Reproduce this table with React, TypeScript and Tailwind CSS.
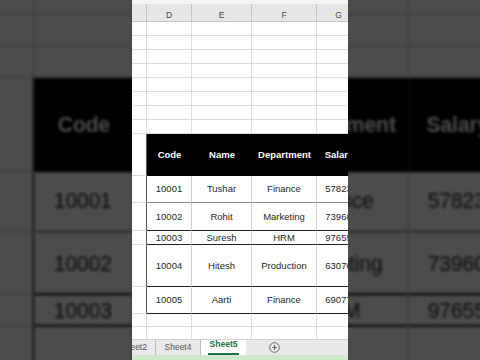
const sheetCols = [
  { key: 'C', w: 'w-[60px]' },
  { key: 'D', w: 'w-[45px]' },
  { key: 'E', w: 'w-[60px]' },
  { key: 'F', w: 'w-[65px]' },
  { key: 'G', w: 'w-[44px]' },
  { key: 'H', w: 'w-[64px]' },
];

const tableCols = ['w-[45px]', 'w-[60px]', 'w-[65px]', 'w-[44px]'];
const headers = ['Code', 'Name', 'Department', 'Salary'];

const rows = [
  { h: 'h-[27px]', b: 'border-b-[#8a8a8a]', cells: ['10001', 'Tushar', 'Finance', '57823'] },
  { h: 'h-[28px]', b: 'border-b-[#222]', cells: ['10002', 'Rohit', 'Marketing', '73960'] },
  { h: 'h-[14px]', b: 'border-b-[#222]', cells: ['10003', 'Suresh', 'HRM', '97655'] },
  { h: 'h-[42px]', b: 'border-b-[#222]', cells: ['10004', 'Hitesh', 'Production', '63070'] },
  { h: 'h-[27px]', b: 'border-b-[#222]', cells: ['10005', 'Aarti', 'Finance', '69077'] },
];

function EmptyRow({ h }: { h: string }) {
  return (
    <div className={`flex ${h}`}>
      {sheetCols.map((c) => (
        <div key={c.key} className={`${c.w} shrink-0 border-r border-b border-[#dcdcdc]`} />
      ))}
    </div>
  );
}

function Sheet() {
  return (
    <div className="w-[338px] bg-white font-['Liberation_Sans',Arial,sans-serif] text-[9.5px] leading-none text-[#1f1f1f]">
      <div className="h-[4px] bg-[#f4f4f4]" />
      <div className="flex h-[18px] border-b border-[#c8c8c8] bg-[#e6e6e6]">
        {sheetCols.map((c) => (
          <div
            key={c.key}
            className={`${c.w} shrink-0 flex items-center justify-center border-r border-[#c4c4c4] pt-[5px] text-[8.5px] text-[#444]`}
          >
            {c.key === 'C' ? '' : c.key}
          </div>
        ))}
      </div>

      {[0, 1, 2, 3, 4, 5, 6, 7].map((i) => (
        <EmptyRow key={i} h="h-[14px]" />
      ))}

      {/* table header */}
      <div className="flex h-[42px]">
        <div className="w-[60px] shrink-0 border-r border-r-[#555] border-b border-b-[#dcdcdc]" />
        {headers.map((t, i) => (
          <div
            key={t}
            className={`${tableCols[i]} shrink-0 flex items-center justify-center overflow-visible whitespace-nowrap bg-black font-bold text-white`}
          >
            {t}
          </div>
        ))}
        <div className="w-[64px] shrink-0 border-l border-l-[#222] border-b border-b-[#dcdcdc]" />
      </div>

      {rows.map((r) => (
        <div key={r.cells[0]} className={`flex ${r.h}`}>
          <div className="w-[60px] shrink-0 border-r border-r-[#555] border-b border-b-[#dcdcdc]" />
          {r.cells.map((t, i) => (
            <div
              key={i}
              className={`${tableCols[i]} shrink-0 flex items-center justify-center whitespace-nowrap border-b ${r.b} border-r ${
                i === 3 ? 'border-r-[#222]' : 'border-r-[#d4d4d4]'
              }`}
            >
              {t}
            </div>
          ))}
          <div className="w-[64px] shrink-0 border-r border-b border-[#dcdcdc]" />
        </div>
      ))}

      <EmptyRow h="h-[13px]" />
      <EmptyRow h="h-[13px]" />
      <EmptyRow h="h-[13px]" />
    </div>
  );
}

function PlusCircle() {
  return (
    <svg width="11" height="11" viewBox="0 0 11 11" fill="none" stroke="#6a6a6a" strokeWidth="1">
      <circle cx="5.5" cy="5.5" r="4.8" />
      <path d="M5.5 3v5M3 5.5h5" />
    </svg>
  );
}

function TabBar() {
  return (
    <div className="flex h-[16px] shrink-0 border-t border-[#d0d0d0] bg-[#e9e9e9] font-['Liberation_Sans',Arial,sans-serif] text-[8.5px] text-[#555]">
      <div className="ml-[-20px] flex w-[44px] shrink-0 items-center justify-center border-r border-[#bdbdbd]">
        Sheet2
      </div>
      <div className="flex w-[45px] shrink-0 items-center justify-center border-r border-[#bdbdbd]">
        Sheet4
      </div>
      <div className="flex w-[45px] shrink-0 items-end justify-center bg-white font-bold text-[#217346]">
        <span className="border-b-2 border-[#217346] px-[2px] pb-[2px]">Sheet5</span>
      </div>
      <div className="ml-[23px] flex items-center">
        <PlusCircle />
      </div>
    </div>
  );
}

export default function App() {
  return (
    <div className="relative flex h-[360px] w-[480px] justify-center overflow-hidden bg-[#4a4a4a]">
      {/* zoomed, darkened copy of the sheet behind */}
      <div className="absolute inset-0 overflow-hidden">
        <div className="absolute inset-0 blur-[1.5px]">
          <div className="absolute left-[-98px] top-[-222px] origin-top-left [transform:scale(2.206,2.24)]">
            <Sheet />
          </div>
        </div>
        <div className="absolute inset-0 bg-black/70" />
      </div>

      <div className="relative z-10 flex h-full w-[216px] flex-col overflow-hidden bg-white">
        <div className="flex-1 overflow-hidden">
          <div className="ml-[-45px]">
            <Sheet />
          </div>
        </div>
        <TabBar />
        <div className="h-[5px] shrink-0 bg-[#cfe7cb]" />
      </div>
    </div>
  );
}
